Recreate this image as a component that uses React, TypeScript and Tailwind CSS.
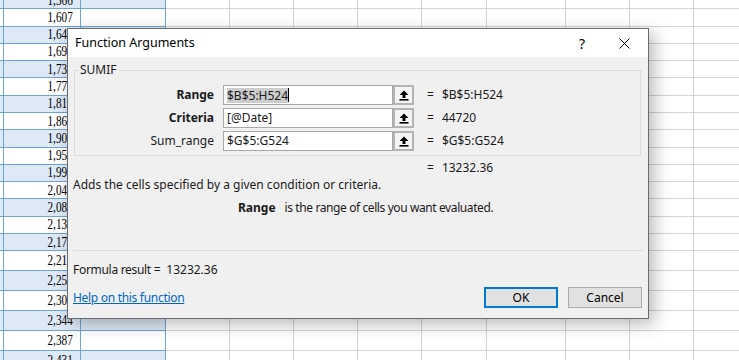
import React from 'react';

const colWidths = [4, 77, 85, 64, 64, 64, 64, 65, 79, 64, 64, 64];

const values = [
  '1,366', '1,607', '1,645', '1,692', '1,734', '1,779', '1,815', '1,862', '1,904', '1,951',
  '1,996', '2,043', '2,088', '2,132', '2,176', '2,219', '2,257', '2,301', '2,344', '2,387', '2,431',
];

function UpArrow() {
  return (
    <svg width="10" height="11" viewBox="0 0 10 11">
      <path d="M5 0.5 L9.5 5 H6.5 V8 H3.5 V5 H0.5 Z" fill="#000" />
      <rect x="0.5" y="9" width="9" height="1.6" fill="#000" />
    </svg>
  );
}

function Sheet() {
  return (
    <div className="mt-[-8px] flex flex-col bg-white" style={{ fontFamily: '"Liberation Serif", serif' }}>
      {values.map((v, r) => {
        const blue = r % 2 === 0;
        return (
          <div key={r} className={`flex ${r < 15 ? 'h-[17.29px]' : 'h-[20px]'}`}>
            {colWidths.map((w, c) => {
              const inTable = c < 3;
              return (
                <div
                  key={c}
                  style={{ width: w }}
                  className={`shrink-0 border-r border-b flex items-center justify-end ${
                    inTable
                      ? `border-[#6fa3d8] ${blue ? 'bg-[#dde9f6]' : 'bg-white'}`
                      : 'border-[#d4d4d4] bg-white'
                  }`}
                >
                  {c === 1 && (
                    <span className="mr-[7px] text-[15px] leading-none text-black scale-x-[0.75] origin-right">{v}</span>
                  )}
                </div>
              );
            })}
          </div>
        );
      })}
    </div>
  );
}

function ArgRow({ label, bold, value, result, selected }: { label: string; bold?: boolean; value: string; result: string; selected?: boolean }) {
  return (
    <div className="flex items-center h-[20px]">
      <div className={`w-[139px] text-right ${bold ? 'font-bold' : ''}`}>{label}</div>
      <div className="ml-[9px] flex h-[20px]">
        <div className="w-[170px] h-full bg-white border border-[#a8a8a8] flex items-center pl-[3px]">
          {selected ? (
            <>
              <span className="bg-[#cdcdcd] leading-[15px]">{value}</span>
              <span className="w-px h-[14px] bg-black" />
            </>
          ) : (
            <span>{value}</span>
          )}
        </div>
        <div className="w-[21px] h-full border-2 border-[#b4b4b4] bg-[#f4f4f4] flex items-center justify-center">
          <UpArrow />
        </div>
      </div>
      <span className="ml-[13px]">=</span>
      <span className="ml-[8px]">{result}</span>
    </div>
  );
}

export default function App() {
  return (
    <div className="relative w-[739px] h-[360px] overflow-hidden bg-white">
      <Sheet />

      <div
        className="absolute left-[67px] top-[28px] w-[582px] h-[291px] border border-[#6b6b6b] bg-[#f0f0f0] shadow-[5px_5px_16px_rgba(0,0,0,0.28)] flex flex-col text-[12px] text-[#1a1a1a]"
        style={{ fontFamily: '"Noto Sans", "Open Sans", sans-serif' }}
      >
        {/* Title bar */}
        <div className="h-[28px] bg-white flex items-center pl-[7px] shrink-0">
          <span className="text-[12.5px] text-black">Function Arguments</span>
          <span className="ml-auto mr-[34px] text-[14px] text-black">?</span>
          <svg width="11" height="11" viewBox="0 0 11 11" className="mr-[18px]">
            <path d="M0.5 0.5 L10.5 10.5 M10.5 0.5 L0.5 10.5" stroke="#000" strokeWidth="1" />
          </svg>
        </div>

        {/* Group box */}
        <div className="relative ml-[6px] mt-[13px] w-[567px] h-[86px] border border-[#dcdcdc] pt-[14px] flex flex-col gap-[3px]">
          <span className="absolute left-[4px] top-[-9px] px-[1px] bg-[#f0f0f0] leading-[16px]">SUMIF</span>
          <ArgRow label="Range" bold value="$B$5:H524" result="$B$5:H524" selected />
          <ArgRow label="Criteria" bold value="[@Date]" result="44720" />
          <ArgRow label="Sum_range" value="$G$5:G524" result="$G$5:G524" />
        </div>

        <div className="flex items-center h-[16px] mt-[4px] pl-[359px]">
          <span>=</span>
          <span className="ml-[8px]">13232.36</span>
        </div>

        <div className="h-[16px] mt-[1px] pl-[5px] flex items-center">
          Adds the cells specified by a given condition or criteria.
        </div>

        <div className="h-[16px] mt-[7px] pl-[170px] flex items-center">
          <span className="font-bold">Range</span>
          <span className="ml-[9px] tracking-[-0.4px]">is the range of cells you want evaluated.</span>
        </div>

        <div className="mt-[34px] mx-[5px] h-px bg-[#dcdcdc]" />

        <div className="h-[16px] mt-[11px] pl-[5px] flex items-center">
          <span className="tracking-[-0.3px]">Formula result =</span>
          <span className="ml-[6px]">13232.36</span>
        </div>

        <div className="mt-[9px] flex items-center pl-[5px] pr-[6px]">
          <span className="text-[#0066cc] underline tracking-[-0.3px]">Help on this function</span>
          <button className="ml-auto w-[74px] h-[21px] border-2 border-[#0078d7] bg-[#e1e1e1] text-black">OK</button>
          <button className="ml-[10px] w-[74px] h-[21px] border border-[#adadad] bg-[#e1e1e1] text-black">Cancel</button>
        </div>
      </div>
    </div>
  );
}
